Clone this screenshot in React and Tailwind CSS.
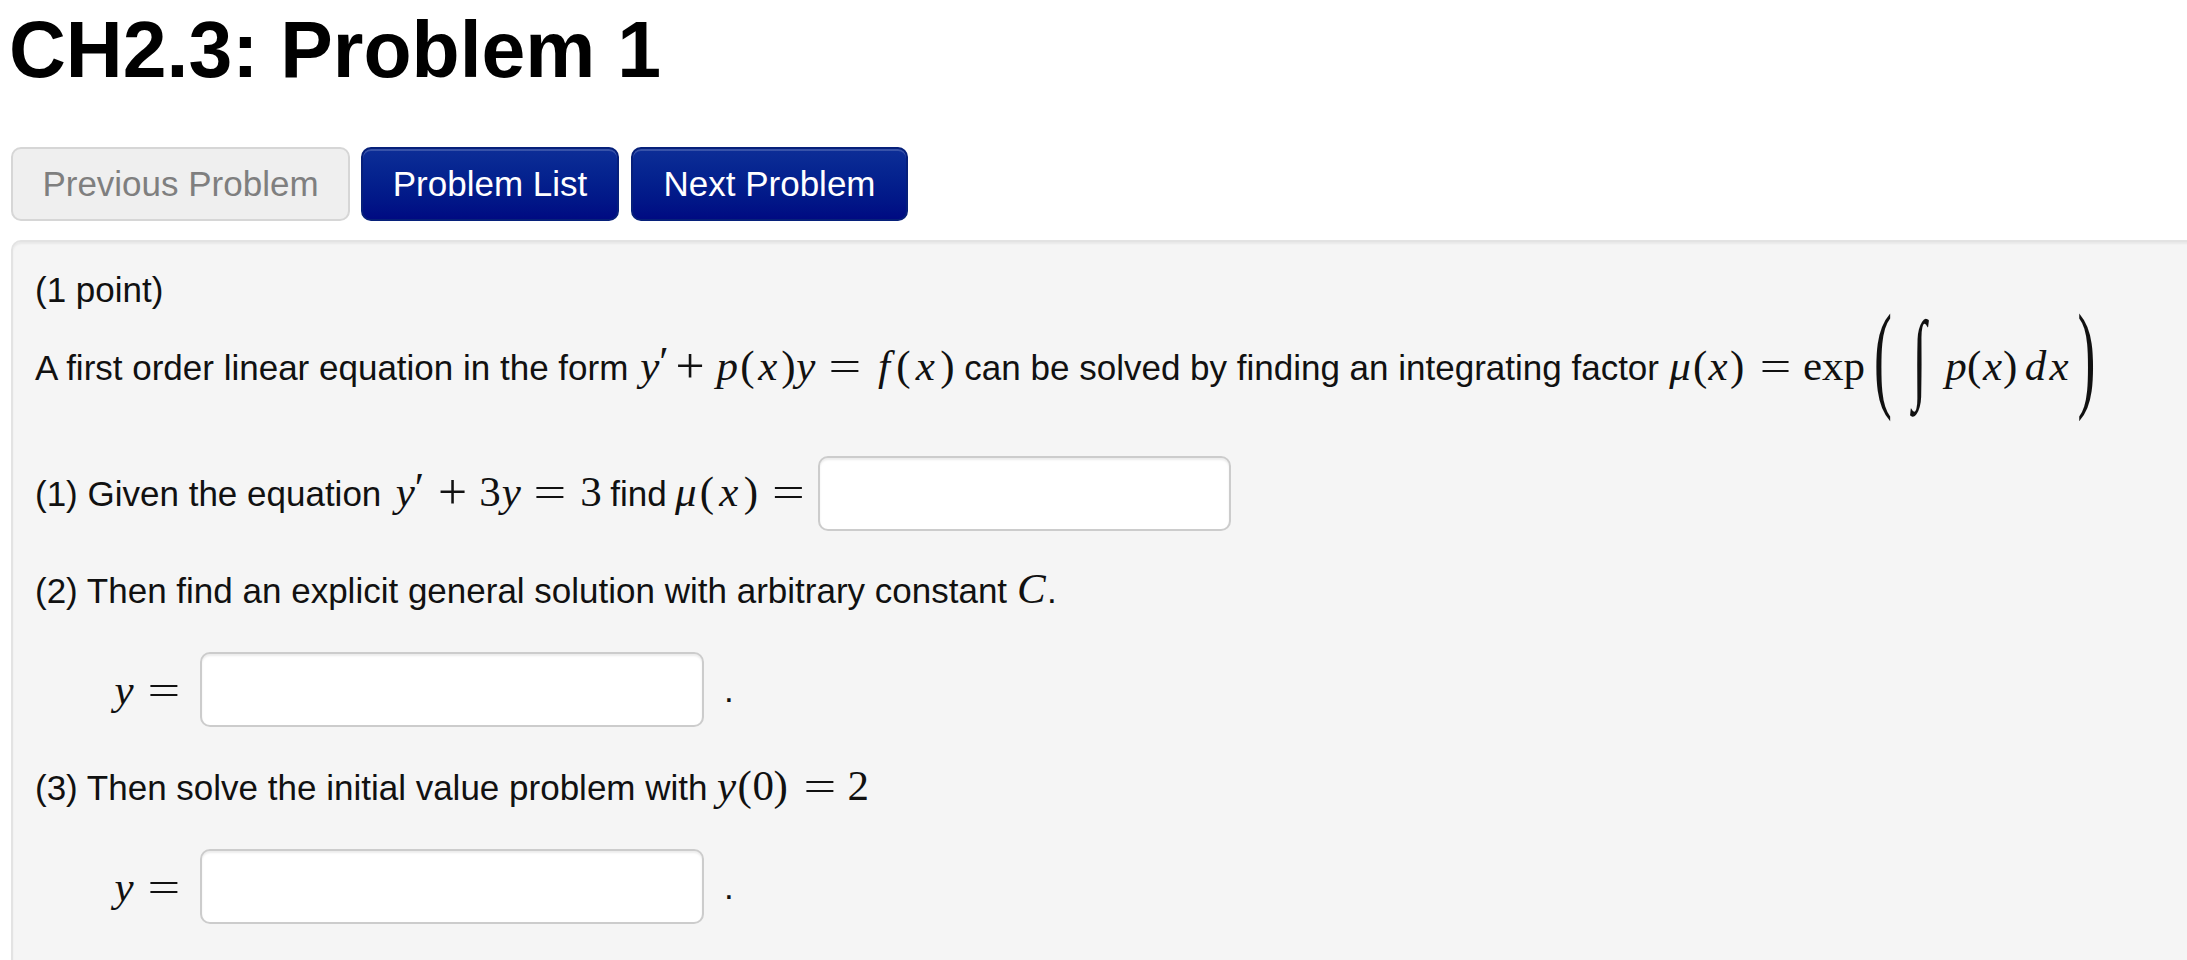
import React from "react";

const T = ({ c = "", children }) => (
  <span className={"inline-block text-center " + c}>{children}</span>
);

const M = ({ children }) => (
  <span className="font-['Liberation_Serif','DejaVu_Serif',serif] text-[43px] leading-none">
    {children}
  </span>
);

const Input = ({ c = "" }) => (
  <div
    className={
      "h-[75px] shrink-0 rounded-[10px] border-2 border-[#cccccc] bg-white shadow-[inset_0_2px_2px_rgba(0,0,0,0.075)] " +
      c
    }
  />
);

export default function App() {
  return (
    <div className="h-[960px] overflow-hidden bg-white pl-[11px] font-['Liberation_Sans',Arial,sans-serif] text-black">
      <h2 className="-ml-[2px] text-[78.75px] font-bold leading-[100px] whitespace-nowrap">
        CH2.3: Problem 1
      </h2>

      <div className="mt-[47px] flex items-start gap-[11px] text-[35px] leading-[50px]">
        <div className="flex h-[74px] w-[339px] items-center justify-center rounded-[10px] border-2 border-[#d6d6d6] bg-[#efefef] text-[#7f7f7f]">
          Previous Problem
        </div>
        <div className="flex h-[74px] w-[258px] items-center justify-center rounded-[10px] border-2 border-[#06207a] bg-linear-to-b from-[#0d2e97] to-[#000a82] text-white shadow-[inset_0_2px_0_rgba(255,255,255,0.18)]">
          Problem List
        </div>
        <div className="ml-[1px] flex h-[74px] w-[277px] items-center justify-center rounded-[10px] border-2 border-[#06207a] bg-linear-to-b from-[#0d2e97] to-[#000a82] text-white shadow-[inset_0_2px_0_rgba(255,255,255,0.18)]">
          Next Problem
        </div>
      </div>

      <div className="mt-[19px] -mr-[20px] h-[800px] rounded-[10px] border-2 border-[#e3e3e3] bg-[#f5f5f5] pl-[22px] pt-[23px] text-[35px] leading-[50px] text-[#111] shadow-[inset_0_2px_2px_rgba(0,0,0,0.05)]">
        <div>(1 point)</div>

        <div className="mt-[28px] whitespace-nowrap">
          <span>A first order linear equation in the form</span>
          <M>
            <T c="ml-[9px] w-[25px] italic">y</T>
            <T c="-ml-[4px] w-[11px] -translate-y-[4px]">′</T>
            <T c="ml-[6px] w-[30px] scale-[1.2]">+</T>
            <T c="ml-[9px] w-[26px] italic">p</T>
            <T c="w-[13px]">(</T>
            <T c="ml-[2px] w-[25px] italic">x</T>
            <T c="ml-[1px] w-[12px]">)</T>
            <T c="w-[25px] italic">y</T>
            <T c="ml-[12px] w-[30px] scale-x-[1.35]">=</T>
            <T c="ml-[11px] w-[25px] italic">f</T>
            <T c="w-[14px]">(</T>
            <T c="ml-[2px] w-[26px] italic">x</T>
            <T c="ml-[2px] w-[13px]">)</T>
          </M>
          <span className="ml-[11px]">can be solved by finding an integrating factor</span>
          <M>
            <T c="ml-[9px] w-[24px] italic">μ</T>
            <T c="ml-[1px] w-[13px]">(</T>
            <T c="ml-[1px] w-[22px] italic">x</T>
            <T c="ml-[1px] w-[13px]">)</T>
            <T c="ml-[19px] w-[27px] scale-x-[1.3]">=</T>
            <T c="ml-[14px] w-[62px]">exp</T>
            <T c="ml-[4px] w-[28px] origin-[50%_60%] scale-x-[1.25] scale-y-[2.75] -translate-y-[2px]">(</T>
            <T c="ml-[2px] w-[41px] text-[50px] leading-[30px] origin-[50%_60%] scale-y-[2] -translate-y-[4px] italic">∫</T>
            <T c="ml-[5px] w-[22px] italic">p</T>
            <T c="w-[14px]">(</T>
            <T c="ml-[1px] w-[21px] italic">x</T>
            <T c="w-[13px]">)</T>
            <T c="ml-[7px] w-[25px] italic">d</T>
            <T c="-ml-[1px] w-[24px] italic">x</T>
            <T c="ml-[5px] w-[21px] origin-[50%_60%] scale-x-[1.25] scale-y-[2.75] -translate-y-[2px]">)</T>
          </M>
        </div>

        <div className="mt-[63px] flex h-[75px] items-center whitespace-nowrap">
          <span>
            <span>(1) Given the equation</span>
            <M>
              <T c="ml-[12px] w-[24px] italic">y</T>
              <T c="-ml-[4px] w-[12px] -translate-y-[4px]">′</T>
              <T c="ml-[13px] w-[29px] scale-[1.2]">+</T>
              <T c="ml-[12px] w-[19px]">3</T>
              <T c="ml-[1px] w-[24px] italic">y</T>
              <T c="ml-[11px] w-[32px] scale-x-[1.35]">=</T>
              <T c="ml-[14px] w-[18px]">3</T>
            </M>
            <span className="ml-[12px]">find</span>
            <M>
              <T c="ml-[7px] w-[24px] italic">μ</T>
              <T c="ml-[2px] w-[14px]">(</T>
              <T c="ml-[3px] w-[24px] italic">x</T>
              <T c="ml-[3px] w-[14px]">)</T>
              <T c="ml-[15px] w-[31px] scale-x-[1.35]">=</T>
            </M>
          </span>
          <Input c="ml-[14px] w-[413px]" />
        </div>

        <div className="mt-[35px] whitespace-nowrap">
          <span>(2) Then find an explicit general solution with arbitrary constant</span>
          <M>
            <T c="ml-[10px] w-[28px] italic">C</T>
          </M>
          <span className="ml-[2px]">.</span>
        </div>

        <div className="mt-[36px] flex h-[75px] items-center">
          <M>
            <T c="ml-[77px] w-[24px] italic">y</T>
            <T c="ml-[13px] w-[30px] scale-x-[1.35]">=</T>
          </M>
          <Input c="ml-[21px] w-[504px]" />
          <span className="ml-[20px]">.</span>
        </div>

        <div className="mt-[36px] whitespace-nowrap">
          <span>(3) Then solve the initial value problem with</span>
          <M>
            <T c="ml-[8px] w-[22px] italic">y</T>
            <T c="w-[13px]">(</T>
            <T c="ml-[2px] w-[20px]">0</T>
            <T c="ml-[1px] w-[13px]">)</T>
            <T c="ml-[18px] w-[32px] scale-x-[1.35]">=</T>
            <T c="ml-[11px] w-[19px]">2</T>
          </M>
        </div>

        <div className="mt-[36px] flex h-[75px] items-center">
          <M>
            <T c="ml-[77px] w-[24px] italic">y</T>
            <T c="ml-[13px] w-[30px] scale-x-[1.35]">=</T>
          </M>
          <Input c="ml-[21px] w-[504px]" />
          <span className="ml-[20px]">.</span>
        </div>
      </div>
    </div>
  );
}
